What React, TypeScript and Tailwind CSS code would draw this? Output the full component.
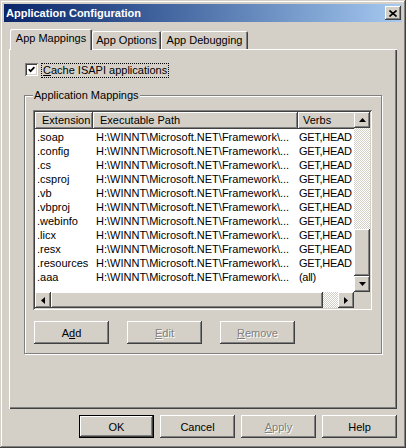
import React from "react";

const raised =
  "shadow-[inset_-1px_-1px_#404040,inset_1px_1px_#ffffff,inset_-2px_-2px_#808080]";

const mappings = [
  { ext: ".soap", verbs: "GET,HEAD" },
  { ext: ".config", verbs: "GET,HEAD" },
  { ext: ".cs", verbs: "GET,HEAD" },
  { ext: ".csproj", verbs: "GET,HEAD" },
  { ext: ".vb", verbs: "GET,HEAD" },
  { ext: ".vbproj", verbs: "GET,HEAD" },
  { ext: ".webinfo", verbs: "GET,HEAD" },
  { ext: ".licx", verbs: "GET,HEAD" },
  { ext: ".resx", verbs: "GET,HEAD" },
  { ext: ".resources", verbs: "GET,HEAD" },
  { ext: ".aaa", verbs: "(all)" },
];

const path = "H:\\WINNT\\Microsoft.NET\\Framework\\...";

function Arrow({ dir }: { dir: "up" | "down" | "left" | "right" }) {
  const pts = {
    up: "3.5,0 7,4 0,4",
    down: "0,0 7,0 3.5,4",
    left: "4,0 4,7 0,3.5",
    right: "0,0 4,3.5 0,7",
  }[dir];
  const vertical = dir === "up" || dir === "down";
  return (
    <div className={`w-[16px] h-[16px] shrink-0 bg-[#d4d0c8] flex items-center justify-center ${raised}`}>
      <svg width={vertical ? 7 : 4} height={vertical ? 4 : 7} viewBox={vertical ? "0 0 7 4" : "0 0 4 7"}>
        <polygon points={pts} fill="#000" />
      </svg>
    </div>
  );
}

function Button({
  children,
  disabled,
  primary,
}: {
  children: React.ReactNode;
  disabled?: boolean;
  primary?: boolean;
}) {
  const shadow = primary
    ? "shadow-[inset_0_0_0_1px_#000000,inset_-2px_-2px_#404040,inset_2px_2px_#ffffff,inset_-3px_-3px_#808080]"
    : raised;
  const text = disabled ? "text-[#808080] [text-shadow:1px_1px_0_#ffffff]" : "text-black";
  return (
    <div className={`w-[75px] h-[23px] shrink-0 bg-[#d4d0c8] flex items-center justify-center text-[11px] ${shadow} ${text}`}>
      <span className="pt-[1px]">{children}</span>
    </div>
  );
}

export default function App() {
  return (
    <div
      className="w-[406px] h-[448px] bg-[#d4d0c8] p-[4px] flex flex-col shadow-[inset_-1px_-1px_#404040,inset_1px_1px_#d4d0c8,inset_-2px_-2px_#808080,inset_2px_2px_#ffffff] overflow-hidden"
      style={{ fontFamily: '"Liberation Sans", Arial, sans-serif' }}
    >
      {/* Title bar */}
      <div className="h-[18px] shrink-0 bg-linear-to-r from-[#0a246a] to-[#a6caf0] flex items-center justify-between pl-[2px] pr-[1px]">
        <span className="text-white font-bold text-[11px] leading-none">Application Configuration</span>
        <div className={`w-[16px] h-[14px] bg-[#d4d0c8] flex items-center justify-center ${raised}`}>
          <svg width="8" height="7" viewBox="0 0 8 7">
            <path d="M0.5 0.5 L7.5 6.5 M7.5 0.5 L0.5 6.5" stroke="#000" strokeWidth="1.6" />
          </svg>
        </div>
      </div>

      {/* Tabs */}
      <div className="mt-[7px] h-[20px] shrink-0 flex items-end pl-[6px] text-[11px] text-black">
        <div className="relative z-10 w-[82px] h-[21px] mb-[-1px] bg-[#d4d0c8] rounded-t-[2px] flex items-center justify-center pb-[3px] shadow-[inset_1px_1px_#ffffff,inset_-1px_0_#404040,inset_-2px_0_#808080]">
          App Mappings
        </div>
        <div className="w-[69px] h-[18px] rounded-t-[2px] flex items-center justify-center shadow-[inset_1px_1px_#ffffff,inset_-1px_0_#404040,inset_-2px_0_#808080]">
          App Options
        </div>
        <div className="w-[87px] h-[18px] rounded-t-[2px] flex items-center justify-center shadow-[inset_1px_1px_#ffffff,inset_-1px_0_#404040,inset_-2px_0_#808080]">
          App Debugging
        </div>
      </div>

      {/* Tab panel */}
      <div className="mx-[5px] h-[360px] shrink-0 pt-[14px] px-[15px] text-[11px] text-black shadow-[inset_1px_1px_#ffffff,inset_-1px_-1px_#404040,inset_-2px_-2px_#808080]">
        <div className="h-[15px] flex items-start ml-[1px]">
          <div className="w-[13px] h-[13px] bg-white flex items-center justify-center shadow-[inset_1px_1px_#808080,inset_-1px_-1px_#ffffff,inset_2px_2px_#404040,inset_-2px_-2px_#d4d0c8]">
            <svg width="7" height="7" viewBox="0 0 7 7">
              <path d="M0.8 3.2 L2.6 5.2 L6.4 1.2" stroke="#000" strokeWidth="1.7" fill="none" />
            </svg>
          </div>
          <span className="ml-[3px] h-[15px] px-[1px] border border-dotted border-black leading-[13px]">
            <span className="underline">C</span>ache ISAPI applications
          </span>
        </div>

        {/* Group box */}
        <div className="relative mt-[17px] w-[358px] border border-[#808080] shadow-[1px_1px_0_#ffffff,inset_1px_1px_0_#ffffff] pt-[14px] pl-[8px] pb-[9px]">
          <span className="absolute -top-[7px] left-[8px] px-[1px] bg-[#d4d0c8] leading-[13px]">
            Application Mappings
          </span>

          {/* List view */}
          <div className="w-[339px] h-[200px] p-[2px] bg-white shadow-[inset_1px_1px_#808080,inset_-1px_-1px_#ffffff,inset_2px_2px_#404040,inset_-2px_-2px_#d4d0c8]">
            <div className="grid grid-cols-[319px_16px] grid-rows-[180px_16px]">
              <div className="overflow-hidden">
                <div className="w-[383px] h-[17px] flex bg-[#d4d0c8]">
                  <div className={`w-[58px] h-full pl-[7px] flex items-center ${raised}`}>Extension</div>
                  <div className={`w-[205px] h-full pl-[7px] flex items-center ${raised}`}>Executable Path</div>
                  <div className={`w-[120px] h-full pl-[5px] flex items-center ${raised}`}>Verbs</div>
                </div>
                <div className="pt-[1px]">
                  {mappings.map((m) => (
                    <div key={m.ext} className="w-[319px] h-[14px] flex items-center whitespace-nowrap leading-[14px]">
                      <div className="w-[58px] pl-[2px]">{m.ext}</div>
                      <div className="w-[205px] pl-[3px]">{path}</div>
                      <div className="w-[56px] pl-[1px] tracking-[-0.3px]">{m.verbs}</div>
                    </div>
                  ))}
                </div>
              </div>

              <div className="flex flex-col">
                <Arrow dir="up" />
                <div className="h-[101px] bg-[image:repeating-conic-gradient(#ffffff_0_25%,#d4d0c8_0_50%)] bg-[length:2px_2px]" />
                <div className={`h-[47px] bg-[#d4d0c8] ${raised}`} />
                <Arrow dir="down" />
              </div>

              <div className="flex">
                <Arrow dir="left" />
                <div className={`w-[272px] h-[16px] bg-[#d4d0c8] ${raised}`} />
                <div className="w-[15px] h-[16px] bg-[image:repeating-conic-gradient(#ffffff_0_25%,#d4d0c8_0_50%)] bg-[length:2px_2px]" />
                <Arrow dir="right" />
              </div>
              <div className="bg-[#d4d0c8]" />
            </div>
          </div>

          <div className="mt-[11px] ml-[1px] flex gap-[18px]">
            <Button>
              A<span className="underline">d</span>d
            </Button>
            <Button disabled>
              <span className="underline">E</span>dit
            </Button>
            <Button disabled>
              <span className="underline">R</span>emove
            </Button>
          </div>
        </div>
      </div>

      {/* Dialog buttons */}
      <div className="mt-[6px] flex justify-end gap-[6px] pr-[5px]">
        <Button primary>OK</Button>
        <Button>Cancel</Button>
        <Button disabled>
          <span className="underline">A</span>pply
        </Button>
        <Button>Help</Button>
      </div>
    </div>
  );
}
